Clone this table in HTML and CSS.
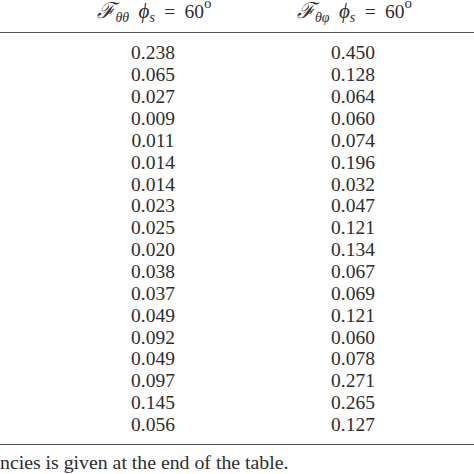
FILE: index.html
```html
<!DOCTYPE html>
<html>
<head>
<meta charset="utf-8">
<link rel="stylesheet" href="styles.css">
</head>
<body>
<div class="page">
  <div class="thead">
    <div class="cell stub"><span class="cut">3</span></div>
    <div class="cell head"><span class="scr">ℱ</span><sub class="it">θθ</sub> <span class="it phi">ϕ</span><sub class="it">s</sub> = 60<sup>o</sup></div>
    <div class="cell head"><span class="scr">ℱ</span><sub class="it">θφ</sub> <span class="it phi">ϕ</span><sub class="it">s</sub> = 60<sup>o</sup></div>
  </div>
  <div class="tbody">
    <div class="row"><div class="cell stub"></div><div class="cell">0.238</div><div class="cell">0.450</div></div>
    <div class="row"><div class="cell stub"></div><div class="cell">0.065</div><div class="cell">0.128</div></div>
    <div class="row"><div class="cell stub"></div><div class="cell">0.027</div><div class="cell">0.064</div></div>
    <div class="row"><div class="cell stub"></div><div class="cell">0.009</div><div class="cell">0.060</div></div>
    <div class="row"><div class="cell stub"></div><div class="cell">0.011</div><div class="cell">0.074</div></div>
    <div class="row"><div class="cell stub"></div><div class="cell">0.014</div><div class="cell">0.196</div></div>
    <div class="row"><div class="cell stub"></div><div class="cell">0.014</div><div class="cell">0.032</div></div>
    <div class="row"><div class="cell stub"></div><div class="cell">0.023</div><div class="cell">0.047</div></div>
    <div class="row"><div class="cell stub"></div><div class="cell">0.025</div><div class="cell">0.121</div></div>
    <div class="row"><div class="cell stub"></div><div class="cell">0.020</div><div class="cell">0.134</div></div>
    <div class="row"><div class="cell stub"></div><div class="cell">0.038</div><div class="cell">0.067</div></div>
    <div class="row"><div class="cell stub"></div><div class="cell">0.037</div><div class="cell">0.069</div></div>
    <div class="row"><div class="cell stub"></div><div class="cell">0.049</div><div class="cell">0.121</div></div>
    <div class="row"><div class="cell stub"></div><div class="cell">0.092</div><div class="cell">0.060</div></div>
    <div class="row"><div class="cell stub"></div><div class="cell">0.049</div><div class="cell">0.078</div></div>
    <div class="row"><div class="cell stub"></div><div class="cell">0.097</div><div class="cell">0.271</div></div>
    <div class="row"><div class="cell stub"></div><div class="cell">0.145</div><div class="cell">0.265</div></div>
    <div class="row"><div class="cell stub"></div><div class="cell">0.056</div><div class="cell">0.127</div></div>
  </div>
  <p class="note">ncies is given at the end of the table.</p>
</div>
</body>
</html>
```
FILE: styles.css
```css
html, body {
  margin: 0;
  padding: 0;
  background: #ffffff;
}
body {
  width: 474px;
  height: 474px;
  overflow: hidden;
}
.page {
  font-family: "Liberation Serif", "DejaVu Serif", serif;
  font-size: 19.5px;
  line-height: 21.86px;
  color: #2e2e2e;
  margin-top: -0.5px;
}
.thead, .row {
  display: grid;
  grid-template-columns: 53px 200px 200px;
}
.thead {
  padding-bottom: 7.5px;
  border-bottom: 1.5px solid #555555;
  word-spacing: 4.5px;
}
.cell {
  text-align: center;
  white-space: nowrap;
}
.head {
  padding-left: 3px;
}
.stub {
  text-align: left;
  overflow: hidden;
}
.cut {
  display: inline-block;
  margin-left: -6px;
  font-size: 12px;
  line-height: 12px;
  vertical-align: 10px;
}
.tbody {
  padding-top: 9.6px;
  padding-bottom: 8.3px;
  border-bottom: 1.5px solid #555555;
}
.scr {
  font-family: "DejaVu Serif", serif;
  font-style: italic;
  font-size: 22px;
}
.it {
  font-style: italic;
}
.phi {
  font-size: 21px;
}
sub {
  font-size: 14px;
  line-height: 0;
  vertical-align: -4px;
  word-spacing: 0;
}
sup {
  font-size: 15px;
  line-height: 0;
  vertical-align: 10px;
}
.note {
  margin: 6.7px 0 0 0;
  white-space: nowrap;
  font-size: 19.8px;
}
```
